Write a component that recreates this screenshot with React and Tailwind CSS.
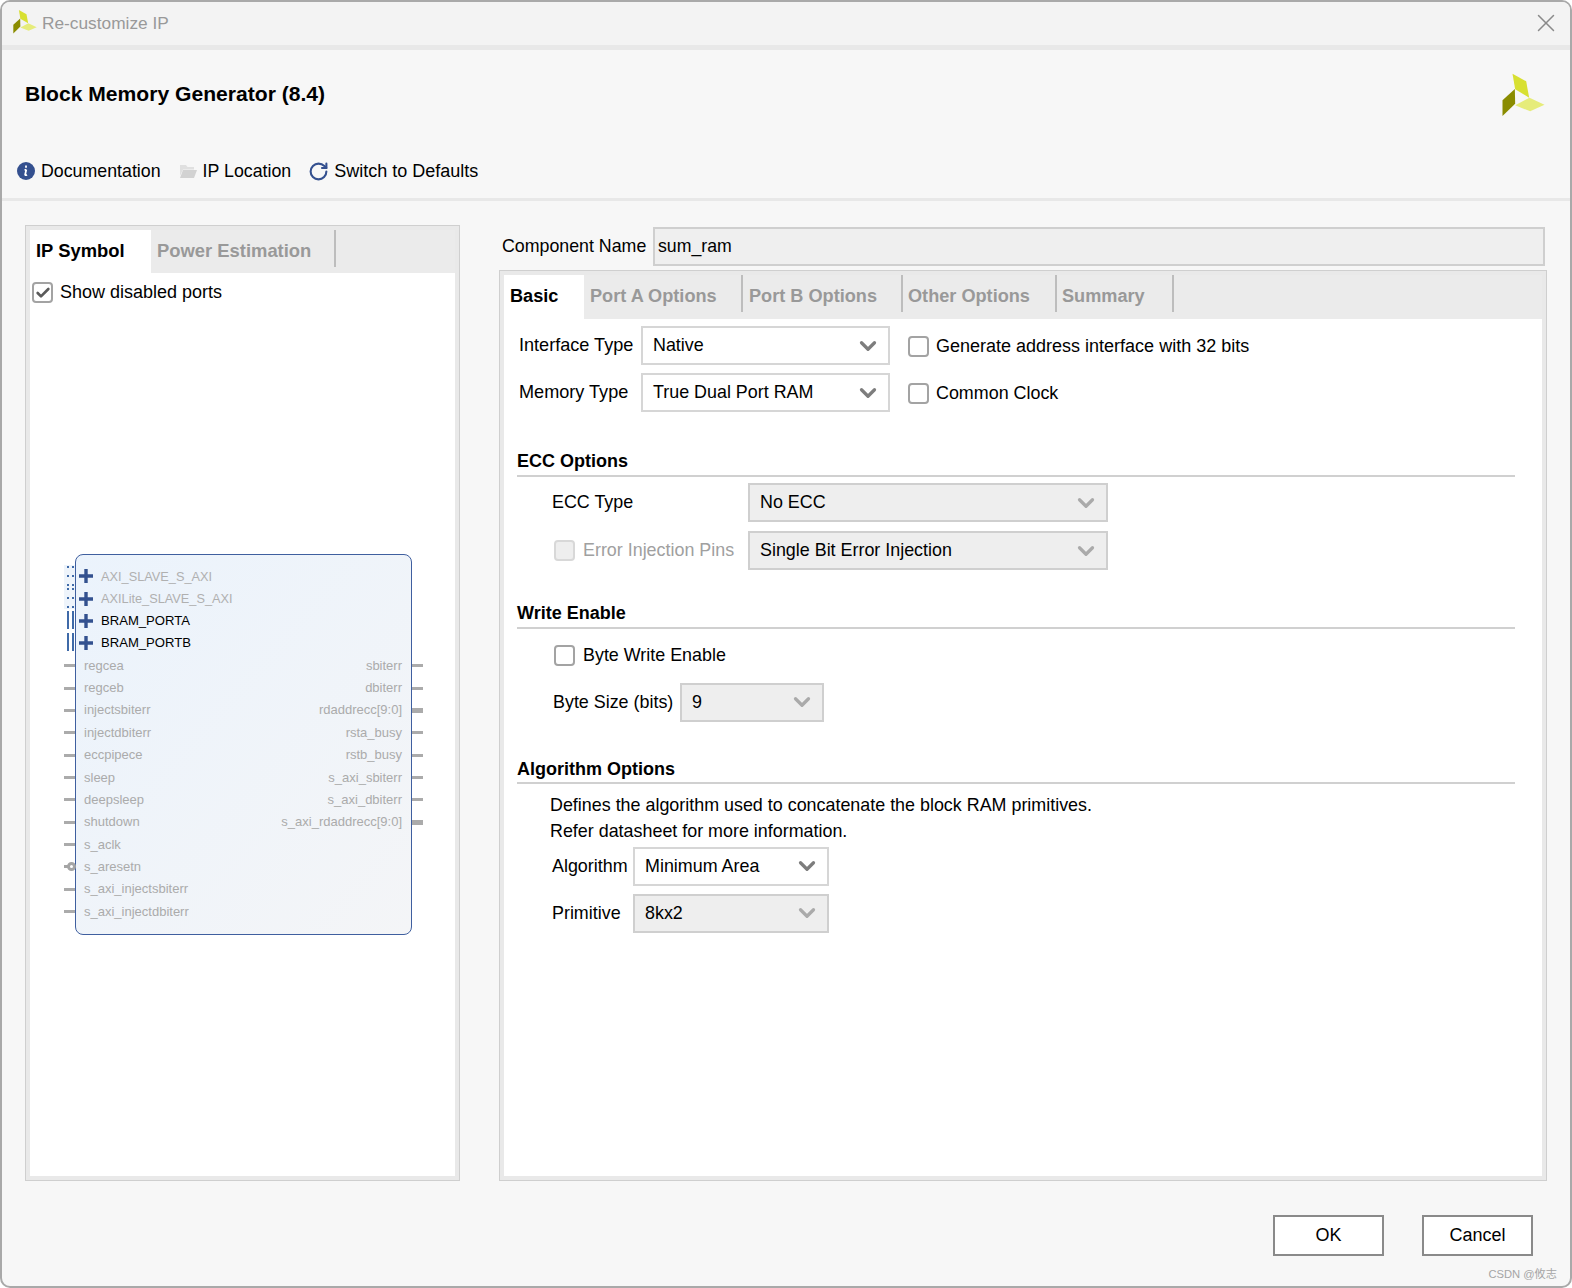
import { ChevronDown, RotateCw, Check, X } from "lucide-react";

const leftPorts = [
  "regcea",
  "regceb",
  "injectsbiterr",
  "injectdbiterr",
  "eccpipece",
  "sleep",
  "deepsleep",
  "shutdown",
  "s_aclk",
  "s_aresetn",
  "s_axi_injectsbiterr",
  "s_axi_injectdbiterr",
];

const rightPorts = [
  "sbiterr",
  "dbiterr",
  "rdaddrecc[9:0]",
  "rsta_busy",
  "rstb_busy",
  "s_axi_sbiterr",
  "s_axi_dbiterr",
  "s_axi_rdaddrecc[9:0]",
];

function Logo({ className }) {
  return (
    <svg viewBox="300 215 140 135" className={className}>
      <polygon points="337,220 378,243 387,292 345,267" fill="#d8e032" />
      <polygon points="307,300 344,266 345,310 307,347" fill="#8a8c00" />
      <polygon points="345,315 388,292 433,313 390,333" fill="#e6ec7a" />
    </svg>
  );
}

function Select({ value, disabled, className }) {
  return (
    <div
      className={`flex h-[39px] items-center justify-between border-2 pl-[10px] pr-[7px] text-black ${
        disabled ? "border-[#cfcfcf] bg-[#eeeeee]" : "border-[#d6d6d6] bg-white"
      } ${className}`}
    >
      <span>{value}</span>
      <ChevronDown
        size={26}
        strokeWidth={3}
        className={disabled ? "text-[#aaaaaa]" : "text-[#7d7d7d]"}
      />
    </div>
  );
}

function CheckBox({ checked, disabled }) {
  return (
    <div
      className={`flex h-[21px] w-[21px] shrink-0 items-center justify-center rounded-[4px] border-2 ${
        disabled ? "border-[#d8d8d8] bg-[#eeeeee]" : "border-[#a3a3a3] bg-white"
      }`}
    >
      {checked && <Check size={16} strokeWidth={4} className="text-[#5a5a5a]" />}
    </div>
  );
}

function SectionTitle({ title, className }) {
  return (
    <div
      className={`-ml-px w-[998px] border-b-2 border-[#d0d0d0] text-[18px] font-bold leading-[24px] text-black ${className}`}
    >
      {title}
    </div>
  );
}

function Tab({ label, className }) {
  return (
    <div
      className={`h-[37px] border-r-2 border-[#bdbdbd] pt-[9px] font-bold leading-[24px] text-[#999999] ${className}`}
    >
      {label}
    </div>
  );
}

function BusMark({ dotted }) {
  if (dotted) {
    return (
      <div className="absolute left-[-14px] top-0 flex h-[22px] w-[11px] flex-col justify-between bg-[#eef4fb] py-[1px] pl-[3px] pr-[1px]">
        {[0, 1, 2].map((i) => (
          <div key={i} className="flex justify-between">
            <span className="h-[2px] w-[2px] bg-[#3f6aa8]" />
            <span className="h-[2px] w-[2px] bg-[#3f6aa8]" />
          </div>
        ))}
      </div>
    );
  }
  return (
    <div className="absolute left-[-11px] top-[1px] flex h-[18px] w-[7px] justify-between">
      <span className="w-[2px] bg-[#3f6aa8]" />
      <span className="w-[2px] bg-[#3f6aa8]" />
    </div>
  );
}

function Plus() {
  return (
    <svg viewBox="0 0 14 14" className="ml-[1px] mr-[8px] h-[14px] w-[14px] shrink-0">
      <path d="M7 0v14M0 7h14" stroke="#33518f" strokeWidth="3.4" />
    </svg>
  );
}

function BusRow({ label, dotted }) {
  return (
    <div
      className={`relative flex h-[22.35px] items-center ${
        dotted ? "text-[12.75px] text-[#b0b0b0]" : "text-[13.1px] text-black"
      }`}
    >
      <BusMark dotted={dotted} />
      <Plus />
      <span>{label}</span>
    </div>
  );
}

function PortRow({ left, right }) {
  const isBus = right && right.includes("[");
  return (
    <div className="relative flex h-[22.35px] items-center justify-between pl-[6px] text-[13px] text-[#ababab]">
      <span>{left}</span>
      {left === "s_aresetn" ? (
        <>
          <span className="absolute left-[-14px] top-[10px] h-[3px] w-[4px] bg-[#a5a5a5]" />
          <span className="absolute left-[-11px] top-[7px] h-[9px] w-[9px] rounded-full border-[3px] border-[#a5a5a5]" />
        </>
      ) : (
        <span className="absolute left-[-14px] top-[10px] h-[3px] w-[11px] bg-[#ababab]" />
      )}
      {right && <span>{right}</span>}
      {right && (
        <span
          className={`absolute right-[-21px] w-[11px] bg-[#ababab] ${
            isBus ? "top-[9px] h-[5px]" : "top-[10px] h-[3px]"
          }`}
        />
      )}
    </div>
  );
}

function SymbolBox() {
  return (
    <div className="ml-[45px] mt-[248px] h-[381px] w-[337px] rounded-[8px] border border-[#3f5f9f] bg-gradient-to-br from-[#ebf3fc] to-[#f4f5f7] pl-[2px] pr-[9px] pt-[10px]">
      <BusRow label="AXI_SLAVE_S_AXI" dotted />
      <BusRow label="AXILite_SLAVE_S_AXI" dotted />
      <BusRow label="BRAM_PORTA" />
      <BusRow label="BRAM_PORTB" />
      {leftPorts.map((name, i) => (
        <PortRow key={name} left={name} right={rightPorts[i]} />
      ))}
    </div>
  );
}

export default function App() {
  return (
    <div className="h-[1288px] w-[1572px] bg-white font-['Liberation_Sans',Arial,sans-serif]">
      <div className="flex h-[1288px] w-[1572px] flex-col overflow-hidden rounded-[10px] border-2 border-[#a9a9a9] bg-[#f7f7f7]">
        {/* Title bar */}
        <div className="flex h-[43px] shrink-0 items-center justify-between bg-[#f3f3f3] pl-[10px] pr-[9px]">
          <div className="flex items-center gap-[4px]">
            <Logo className="mb-[4px] h-[25px] w-[26px]" />
            <span className="text-[17.3px] text-[#999999]">Re-customize IP</span>
          </div>
          <X size={30} strokeWidth={1.2} className="mb-[2px] text-[#8a8a8a]" />
        </div>
        <div className="h-[5px] shrink-0 bg-[#e8e8e8]" />

        {/* Header */}
        <div className="flex h-[88px] shrink-0 items-center justify-between pl-[23px] pr-[23px]">
          <span className="text-[21.1px] font-bold text-black">Block Memory Generator (8.4)</span>
          <Logo className="h-[45px] w-[47px]" />
        </div>

        {/* Toolbar */}
        <div className="flex h-[63px] shrink-0 items-start border-b-[3px] border-[#e8e8e8] pl-[15px] pt-[21px] text-[17.8px] text-black">
          <div className="flex h-[24px] items-center">
            <svg viewBox="0 0 18 18" className="h-[18px] w-[18px]">
              <circle cx="9" cy="9" r="9" fill="#34508f" />
              <path d="M9 3.4v2.4M9.4 7.6L7.6 8.2M9.3 7.6L8.2 12.4c-.2.9.6 1.1 1.8.3" stroke="#ffffff" strokeWidth="1.8" fill="none" />
            </svg>
            <span className="ml-[6px]">Documentation</span>
            <svg viewBox="0 0 18 16" className="ml-[18px] h-[16px] w-[18px]">
              <path d="M1 2h6l1.5 2H15v2.5H4L1 13z" fill="#e0e0e0" />
              <path d="M1 15l3-8h14l-3 8z" fill="#d2d2d2" />
            </svg>
            <span className="ml-[6px]">IP Location</span>
            <RotateCw size={21} strokeWidth={2.4} className="ml-[17px] text-[#34508f]" />
            <span className="ml-[5px] text-[18px]">Switch to Defaults</span>
          </div>
        </div>

        {/* Main panels */}
        <div className="flex shrink-0 pl-[23px] pt-[24px]">
          {/* Left panel */}
          <div className="h-[956px] w-[435px] border border-[#cfcfcf] bg-[#e9e9e9] p-[4px]">
            <div className="flex h-[43px] bg-[#ebebeb] text-[18.4px]">
              <div className="h-[43px] w-[121px] bg-white pl-[6px] pt-[9px] font-bold leading-[24px] text-black">
                IP Symbol
              </div>
              <Tab label="Power Estimation" className="w-[185px] pl-[6px]" />
            </div>
            <div className="h-[903px] bg-white pt-[6px]">
              <div className="flex items-center pl-[2px]">
                <CheckBox checked />
                <span className="ml-[7px] text-[18px] text-black">Show disabled ports</span>
              </div>
              <SymbolBox />
            </div>
          </div>

          {/* Right side */}
          <div className="ml-[39px] w-[1048px]">
            <div className="flex h-[45px] items-start pt-[2px]">
              <span className="w-[154px] pl-[3px] pt-[7px] text-[17.8px] leading-[24px] text-black">Component Name</span>
              <div className="flex h-[39px] w-[892px] items-center border-2 border-[#cfcfcf] bg-[#efefef] pl-[3px] text-[17.7px] text-black">
                sum_ram
              </div>
            </div>

            <div className="h-[911px] border border-[#cfcfcf] bg-[#e9e9e9] p-[4px]">
              <div className="flex h-[44px] bg-[#ebebeb] text-[18.15px]">
                <div className="h-[44px] w-[80px] bg-white pl-[6px] pt-[9px] font-bold leading-[24px] text-black">
                  Basic
                </div>
                <Tab label="Port A Options" className="w-[159px] pl-[6px]" />
                <Tab label="Port B Options" className="w-[160px] pl-[6px]" />
                <Tab label="Other Options" className="w-[154px] pl-[5px]" />
                <Tab label="Summary" className="w-[117px] pl-[5px]" />
              </div>

              <div className="h-[857px] bg-white pl-[14px] pt-[7px] text-[17.9px] text-black">
                <div className="flex items-center">
                  <span className="w-[123px] pl-[1px] text-[18.1px]">Interface Type</span>
                  <Select value="Native" className="w-[249px]" />
                  <div className="ml-[18px] flex items-center pt-[1px]">
                    <CheckBox />
                    <span className="ml-[7px] text-[18px]">Generate address interface with 32 bits</span>
                  </div>
                </div>
                <div className="mt-[8px] flex items-center">
                  <span className="w-[123px] pl-[1px] text-[18.1px]">Memory Type</span>
                  <Select value="True Dual Port RAM" className="w-[249px]" />
                  <div className="ml-[18px] flex items-center pt-[2px]">
                    <CheckBox />
                    <span className="ml-[7px]">Common Clock</span>
                  </div>
                </div>

                <SectionTitle title="ECC Options" className="mt-[37px] h-[28px]" />
                <div className="mt-[6px] flex items-center pl-[34px]">
                  <span className="w-[196px]">ECC Type</span>
                  <Select value="No ECC" disabled className="w-[360px]" />
                </div>
                <div className="mt-[9px] flex items-center pl-[36px]">
                  <CheckBox disabled />
                  <span className="ml-[8px] w-[165px] text-[#a0a0a0]">Error Injection Pins</span>
                  <Select value="Single Bit Error Injection" disabled className="w-[360px]" />
                </div>

                <SectionTitle title="Write Enable" className="mt-[31px] h-[28px]" />
                <div className="mt-[13px] flex items-center pl-[36px]">
                  <CheckBox />
                  <span className="ml-[8px]">Byte Write Enable</span>
                </div>
                <div className="mt-[14px] flex items-center pl-[35px]">
                  <span className="w-[127px]">Byte Size (bits)</span>
                  <Select value="9" disabled className="w-[144px]" />
                </div>

                <SectionTitle title="Algorithm Options" className="mt-[35px] h-[27px]" />
                <div className="mt-[8px] pl-[32px] leading-[26px]">
                  <div>Defines the algorithm used to concatenate the block RAM primitives.</div>
                  <div>Refer datasheet for more information.</div>
                </div>
                <div className="mt-[3px] flex items-center pl-[34px]">
                  <span className="w-[81px]">Algorithm</span>
                  <Select value="Minimum Area" className="w-[196px]" />
                </div>
                <div className="mt-[8px] flex items-center pl-[34px]">
                  <span className="w-[81px]">Primitive</span>
                  <Select value="8kx2" disabled className="w-[196px]" />
                </div>
              </div>
            </div>
          </div>
        </div>

        {/* Footer */}
        <div className="relative flex flex-1 items-start justify-end pr-[37px] pt-[34px]">
          <button className="mr-[38px] h-[41px] w-[111px] border-2 border-[#8a8a8a] bg-white text-[18px] text-black">OK</button>
          <button className="h-[41px] w-[111px] border-2 border-[#8a8a8a] bg-white text-[18px] text-black">Cancel</button>
          <span className="absolute bottom-[3px] right-[13px] font-['Liberation_Sans','Noto_Sans_CJK_SC',sans-serif] text-[11.2px] text-[#a5a5a5]">
            CSDN @攸志
          </span>
        </div>
      </div>
    </div>
  );
}
